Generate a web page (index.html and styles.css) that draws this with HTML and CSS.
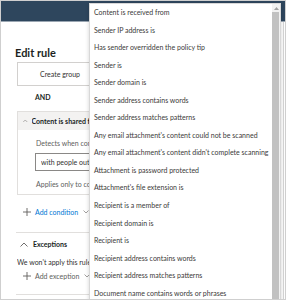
FILE: index.html
```html
<!DOCTYPE html>
<html lang="en">
<head>
<meta charset="utf-8">
<title>Edit rule</title>
<link rel="stylesheet" href="styles.css">
</head>
<body>
<div class="frame">
  <header class="topbar"></header>
  <main class="page">
    <div class="panel">
      <h1 class="title">Edit rule</h1>
      <div class="group-btn">Create group</div>
      <div class="and">AND</div>
      <section class="card">
        <div class="card-head">
          <svg class="chev-up" width="9" height="6" viewBox="0 0 9 6"><polyline points="0.5,5 4.5,1 8.5,5" fill="none" stroke="#605e5c" stroke-width="0.9"/></svg>
          <span class="card-title">Content is shared from Microsoft 365</span>
        </div>
        <div class="card-body">
          <p class="line">Detects when content is sent</p>
          <div class="input"><span class="clip">with people outside my organization</span></div>
          <p class="line">Applies only to content stored in Exchange, SharePoint, OneDrive</p>
        </div>
      </section>
      <div class="add-row">
        <svg class="plus" width="8" height="8" viewBox="0 0 8 8"><path d="M4 0v8M0 4h8" stroke="#605e5c" stroke-width="0.9" fill="none"/></svg>
        <span class="add-label blue">Add condition</span>
        <svg class="chev-down" width="6" height="4" viewBox="0 0 6 4"><polyline points="0.5,0.5 3,3 5.5,0.5" fill="none" stroke="#8a8886" stroke-width="0.8"/></svg>
      </div>
      <div class="divider"></div>
      <div class="exc-head">
        <svg class="chev-up" width="8" height="5" viewBox="0 0 8 5"><polyline points="0.5,4.5 4,1 7.5,4.5" fill="none" stroke="#605e5c" stroke-width="0.9"/></svg>
        <span class="exc-title">Exceptions</span>
      </div>
      <p class="exc-text">We won't apply this rule to content that matches any of these</p>
      <div class="add-row">
        <svg class="plus" width="8" height="8" viewBox="0 0 8 8"><path d="M4 0v8M0 4h8" stroke="#605e5c" stroke-width="0.9" fill="none"/></svg>
        <span class="add-label">Add exception</span>
        <svg class="chev-down" width="6" height="4" viewBox="0 0 6 4"><polyline points="0.5,0.5 3,3 5.5,0.5" fill="none" stroke="#8a8886" stroke-width="0.8"/></svg>
      </div>
      <div class="divider bottom"></div>
    </div>
    <div class="rest"></div>
  </main>
  <div class="menu">
    <ul class="items">
      <li>Content is received from</li>
      <li>Sender IP address is</li>
      <li>Has sender overridden the policy tip</li>
      <li>Sender is</li>
      <li>Sender domain is</li>
      <li>Sender address contains words</li>
      <li>Sender address matches patterns</li>
      <li>Any email attachment's content could not be scanned</li>
      <li>Any email attachment's content didn't complete scanning</li>
      <li>Attachment is password protected</li>
      <li>Attachment's file extension is</li>
      <li>Recipient is a member of</li>
      <li>Recipient domain is</li>
      <li>Recipient is</li>
      <li>Recipient address contains words</li>
      <li>Recipient address matches patterns</li>
      <li>Document name contains words or phrases</li>
    </ul>
    <div class="scrollbar">
      <div class="arrow"><svg width="5" height="3" viewBox="0 0 5 3"><polygon points="0,3 2.5,0 5,3" fill="#a0a0a0"/></svg></div>
      <div class="thumb"></div>
    </div>
  </div>
</div>
</body>
</html>
```

FILE: styles.css
```css
* { box-sizing: border-box; margin: 0; padding: 0; }
body { margin: 0; background: #ffffff; font-family: Lato, "Open Sans", sans-serif; color: #323130; }
.frame {
  position: relative;
  width: 286px;
  height: 300px;
  overflow: hidden;
  border: 1px solid #cfcfcf;
  background: #ffffff;
  display: flex;
  flex-direction: column;
}
.topbar {
  height: 21px;
  flex: none;
  background: #2e465d;
  border-bottom: 1px solid #9aa6b2;
}
.page {
  flex: 1;
  display: flex;
}
.panel {
  width: 89px;
  flex: none;
  overflow: hidden;
  padding-left: 14px;
  padding-top: 24px;
  display: flex;
  flex-direction: column;
}
.rest {
  flex: 1;
  border-right: 1px solid #d6d6d6;
  margin-right: 1px;
}
.title {
  font-size: 11px;
  font-weight: 700;
  line-height: 14px;
  height: 14px;
  color: #201f1e;
  white-space: nowrap;
}
.group-btn {
  margin-top: 2px;
  margin-left: 2px;
  width: 90px;
  height: 24px;
  border: 1px solid #d2d0ce;
  border-right: none;
  font-size: 7px;
  line-height: 22px;
  padding-left: 22px;
  color: #323130;
  white-space: nowrap;
}
.and {
  margin-top: 6px;
  margin-left: 20px;
  font-size: 7px;
  font-weight: 700;
  line-height: 10px;
  color: #201f1e;
}
.card {
  margin-top: 9px;
  margin-left: 2px;
  border: 1px solid #e1dfdd;
  border-right: none;
  padding-bottom: 5px;
}
.card-head {
  height: 18px;
  background: #f3f2f1;
  display: flex;
  align-items: center;
  padding-left: 5px;
  gap: 4px;
  overflow: hidden;
}
.card-title {
  font-size: 7px;
  font-weight: 700;
  color: #201f1e;
  white-space: nowrap;
  overflow: hidden;
  min-width: 0;
}
.card-body {
  padding-left: 17px;
  padding-top: 8px;
}
.line {
  font-size: 7px;
  line-height: 10px;
  color: #605e5c;
  white-space: nowrap;
  overflow: hidden;
  padding-left: 1px;
}
.input {
  margin-top: 5px;
  margin-bottom: 8px;
  height: 18px;
  border: 1px solid #8a8886;
  border-right: none;
  font-size: 7px;
  line-height: 16px;
  padding-left: 5px;
  color: #323130;
  white-space: nowrap;
  overflow: hidden;
}
.clip { display: block; overflow: hidden; }
.add-row {
  margin-top: 10px;
  margin-left: 8px;
  height: 14px;
  display: flex;
  align-items: center;
}
.plus { margin-right: 4px; flex: none; }
.add-label {
  font-size: 7px;
  color: #605e5c;
  margin-right: 5px;
  white-space: nowrap;
}
.add-label.blue { color: #0078d4; }
.chev-down { flex: none; }
.divider {
  margin-top: 13px;
  height: 1px;
  background: #e1dfdd;
  margin-left: 1px;
}
.exc-head {
  margin-top: 6px;
  margin-left: 5px;
  height: 10px;
  display: flex;
  align-items: center;
  gap: 5px;
}
.exc-title {
  font-size: 7px;
  font-weight: 700;
  color: #201f1e;
}
.exc-text {
  margin-top: 8px;
  margin-left: 2px;
  font-size: 7px;
  line-height: 10px;
  color: #323130;
  white-space: nowrap;
  overflow: hidden;
}
.exc-text + .add-row { margin-top: 2px; }
.divider.bottom { margin-top: 11px; }
.menu {
  position: absolute;
  left: 88px;
  top: 2px;
  width: 192px;
  height: 310px;
  background: #ffffff;
  border: 1px solid #d8d8d8;
  box-shadow: 0 1px 4px rgba(0, 0, 0, 0.18);
  display: flex;
}
.items {
  list-style: none;
  flex: 1;
}
.items li {
  height: 17.55px;
  line-height: 17.55px;
  padding-left: 4px;
  font-size: 7px;
  color: #3b3a39;
  white-space: nowrap;
}
.scrollbar {
  width: 8px;
  flex: none;
  background: #f1f1f1;
  display: flex;
  flex-direction: column;
}
.arrow {
  height: 8px;
  display: flex;
  align-items: center;
  justify-content: center;
}
.thumb {
  flex: 1;
  margin: 0 1px 0 0;
  background: #c1c1c1;
}
```
